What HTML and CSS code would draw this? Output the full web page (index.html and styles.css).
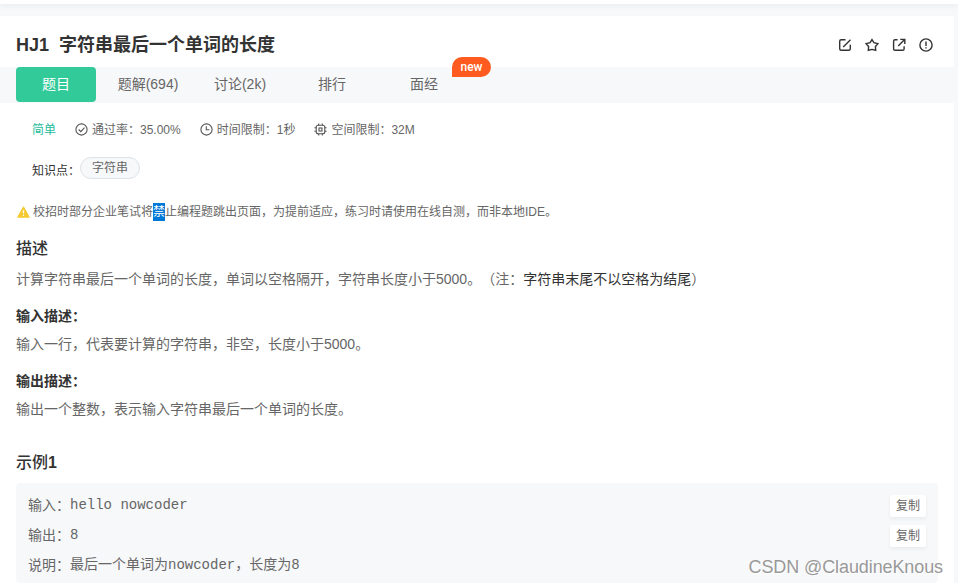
FILE: index.html
```
<!doctype html>
<html lang="zh-CN">
<head>
    <meta charset="utf-8">
    <title>HJ1 字符串最后一个单词的长度</title>
    <link rel="stylesheet" href="styles.css">
</head>

<body>
<div class="topbar"></div>
<div class="panel">
    <div class="header">
        <h1><span class="num">HJ1</span>字符串最后一个单词的长度</h1>
        <div class="tools">
            <svg viewBox="0 0 14 14"><path d="M7.5 1.7H3.2Q1.7 1.7 1.7 3.2v7.6q0 1.5 1.5 1.5h7.6q1.5 0 1.5-1.5V6.8M5.2 8.9l7.3-7.1"/></svg>
            <svg viewBox="0 0 14 14"><path d="M7 1.6l1.9 3 4 1.1-2.5 2.9.3 3.7L7 11.4l-3.7.9.3-3.7-2.5-2.9 4-1.1z"/></svg>
            <svg viewBox="0 0 14 14"><path d="M5.6 1.8H3Q1.6 1.8 1.6 3.2v7.7q0 1.4 1.4 1.4h7.7q1.4 0 1.4-1.4V8.2M8.2 1.4h4.6V6M12.6 1.6L6.2 8"/></svg>
            <svg viewBox="0 0 14 14"><circle cx="7" cy="7" r="6.1"/><path d="M7 3.6v4.3M7 9.2v1.4"/></svg>
        </div>
    </div>

    <div class="tabs">
        <div class="tab active">题目</div>
        <div class="tab">题解(694)</div>
        <div class="tab">讨论(2k)</div>
        <div class="tab">排行</div>
        <div class="tab">面经<span class="badge">new</span></div>
    </div>

    <div class="content">
        <div class="meta">
            <span class="level">简单</span>
            <span class="item">
                <svg viewBox="0 0 13 13"><circle cx="6.5" cy="6.5" r="5.6"/><path d="M3.7 6.5l2.1 2.1 3.7-4"/></svg>
                通过率：35.00%
            </span>
            <span class="item">
                <svg viewBox="0 0 13 13"><circle cx="6.5" cy="6.5" r="5.6"/><path d="M6.3 3.2v3.6h3.2"/></svg>
                时间限制：1秒
            </span>
            <span class="item">
                <svg viewBox="0 0 13 13"><rect x="2.2" y="2.2" width="8.6" height="8.6" rx="2"/><rect x="5" y="5" width="3" height="3"/><path d="M4.7 .4v2M8.3 .4v2M4.7 10.6v2M8.3 10.6v2M.4 4.7h2M.4 8.3h2M10.6 4.7h2M10.6 8.3h2"/></svg>
                空间限制：32M
            </span>
        </div>

        <div class="points">
            <span class="label">知识点：</span>
            <span class="tag">字符串</span>
        </div>

        <div class="warn">
            <svg viewBox="0 0 13 12"><path class="tri" d="M6.5 .8l5.8 10.4H.7z"/><path class="mark" d="M6.5 4.2v3.4M6.5 8.7v1.3"/></svg>
            <span>校招时部分企业笔试将<span class="sel">禁</span>止编程题跳出页面，为提前适应，练习时请使用在线自测，而非本地IDE。</span>
        </div>

        <h2>描述</h2>
        <p>计算字符串最后一个单词的长度，单词以空格隔开，字符串长度小于5000。（注：<span class="dark">字符串末尾不以空格为结尾</span>）</p>
        <h3>输入描述：</h3>
        <p>输入一行，代表要计算的字符串，非空，长度小于5000。</p>
        <h3>输出描述：</h3>
        <p>输出一个整数，表示输入字符串最后一个单词的长度。</p>

        <h2 class="example">示例<b>1</b></h2>
        <div class="sample">
            <div class="row"><span>输入：</span><code>hello nowcoder</code><span class="copy">复制</span></div>
            <div class="row"><span>输出：</span><code>8</code><span class="copy">复制</span></div>
            <div class="row"><span>说明：</span><code>最后一个单词为nowcoder，长度为8</code></div>
        </div>
    </div>
</div>
<div class="watermark">CSDN @ClaudineKnous</div>
</body>
</html>
```
FILE: styles.css
```
body {
    margin: 0;
    height: 583px;
    overflow: hidden;
    background: #f7f8fa;
    color: #666;
    font-family: "Liberation Sans", "Noto Sans CJK SC", sans-serif;
    font-size: 14px;
    text-spacing-trim: space-all;
}

h1, h2, h3, p {
    margin: 0;
}

svg {
    fill: none;
    stroke: #333;
    stroke-width: 1.4;
    flex: none;
}

.topbar {
    height: 4px;
    background: white;
    box-shadow: 0 1px 6px rgba(0, 0, 0, 0.08);
}

.panel {
    width: 954px;
    height: 567px;
    margin-top: 12px;
    background: white;
}

.header {
    height: 51px;
    padding: 0 21px 0 16px;
    display: flex;
    justify-content: space-between;
}

.header h1 {
    font-size: 18px;
    line-height: 58px;
    color: #333;
}

.num {
    margin-right: 10px;
}

.tools {
    height: 58px;
    display: flex;
    align-items: center;
    gap: 13px;
}

.tools svg {
    width: 14px;
    height: 14px;
}

.tabs {
    height: 36px;
    padding-left: 16px;
    display: flex;
    gap: 12px;
    background: #f7f8fa;
}

.tab {
    position: relative;
    width: 80px;
    height: 35px;
    line-height: 34px;
    text-align: center;
    white-space: nowrap;
}

.active {
    background: #32ca99;
    color: white;
    border-radius: 4px;
}

.badge {
    position: absolute;
    left: 68px;
    top: -10px;
    width: 39px;
    height: 20px;
    line-height: 20px;
    border-radius: 10px 10px 10px 0;
    background: #ff5a1f;
    color: white;
    font-family: Roboto, sans-serif;
    font-size: 12px;
    font-weight: 500;
}

.content {
    padding: 0 16px;
}

.meta {
    padding: 16px 0 0 16px;
    height: 22px;
    line-height: 22px;
    display: flex;
    font-size: 12px;
}

.level {
    color: #25bb9b;
    margin-right: 19px;
}

.item {
    display: flex;
    align-items: center;
    gap: 4px;
    margin-right: 19px;
}

.item svg {
    width: 13px;
    height: 13px;
    margin-bottom: 2px;
    stroke: #555;
    stroke-width: 1.1;
}

.points {
    margin-top: 16px;
    padding-left: 16px;
    height: 22px;
    display: flex;
    font-size: 12px;
}

.label {
    width: 48px;
    line-height: 28px;
    color: #333;
}

.tag {
    box-sizing: border-box;
    width: 60px;
    height: 22px;
    line-height: 20px;
    text-align: center;
    border: 1px solid #dfe2e5;
    border-radius: 11px;
    background: #f7f8fa;
}

.warn {
    margin-top: 23px;
    height: 20px;
    line-height: 20px;
    display: flex;
    align-items: center;
    gap: 3px;
    font-size: 12px;
}

.warn svg {
    width: 13px;
    height: 12px;
    margin-left: 1px;
}

.tri {
    fill: #f4ca2f;
    stroke: #f4ca2f;
    stroke-width: 1;
    stroke-linejoin: round;
}

.mark {
    stroke: white;
    stroke-width: 1.2;
}

.sel {
    padding: 2px 0;
    background: #0078d7;
    color: white;
}

h2 {
    margin-top: 15px;
    font-size: 16px;
    font-weight: 500;
    line-height: 24px;
    color: #333;
}

p {
    margin-top: 6px;
    line-height: 24px;
}

.dark {
    color: #333;
}

h3 {
    margin-top: 13px;
    font-size: 14px;
    line-height: 24px;
    color: #333;
}

h3 + p {
    margin-top: 4px;
}

.example {
    margin-top: 30px;
}

.sample {
    margin-top: 8px;
    padding: 7px 12px 3px;
    height: 90px;
    border-radius: 4px;
    background: #f7f8fa;
}

.row {
    height: 30px;
    line-height: 30px;
    display: flex;
}

code {
    font-family: "Liberation Mono", "Noto Sans CJK SC", monospace;
    font-size: 14px;
}

.copy {
    margin: 5px 0 0 auto;
    width: 36px;
    height: 22px;
    line-height: 22px;
    text-align: center;
    font-size: 12px;
    border-radius: 2px;
    background: white;
    box-shadow: 0 2px 4px rgba(0, 0, 0, 0.06);
}

/* sits over the sample box, bottom right */
.watermark {
    position: absolute;
    right: 15px;
    bottom: 4px;
    font-size: 18px;
    line-height: 24px;
    letter-spacing: -0.1px;
    color: #999;
    text-shadow: 1px 1px 0 white;
}
```
